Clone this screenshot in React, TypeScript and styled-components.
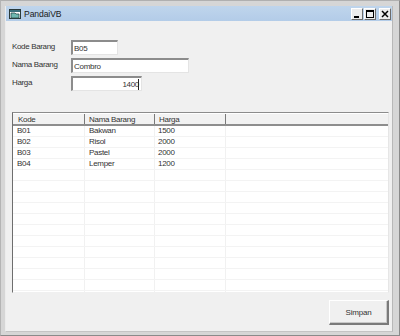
import React from "react";
import styled, { createGlobalStyle } from "styled-components";

const GlobalStyle = createGlobalStyle`
  html, body {
    margin: 0;
    padding: 0;
    background: #ffffff;
  }
  body {
    font-family: "Liberation Sans", Arial, sans-serif;
  }
`;

const Window = styled.div`
  width: 400px;
  height: 336px;
  box-sizing: border-box;
  background: #d6d6d6;
  border-top: 1px solid #b0b0b0;
  border-left: 1px solid #b4b4b4;
  border-right: 1px solid #8a8a8a;
  border-bottom: 1px solid #8a8a8a;
  padding: 5px 6px 5px 4px;
  display: flex;
  flex-direction: column;
`;

const Frame = styled.div`
  flex: 1;
  display: flex;
  flex-direction: column;
  border-left: 1px solid #ececec;
  border-right: 1px solid #b8b8b8;
  border-bottom: 1px solid #c4c4c4;
`;

const TitleBar = styled.div`
  height: 15px;
  background: linear-gradient(to bottom, #bfd5ec, #b3cce8);
  display: flex;
  align-items: center;
  padding: 0 1px 0 3px;
`;

const TitleText = styled.span`
  font-size: 8.6px;
  color: #1a1a1a;
  margin-left: 3px;
  letter-spacing: -0.1px;
`;

const TitleButtons = styled.div`
  margin-left: auto;
  display: flex;
  gap: 1px;
`;

const TitleButton = styled.div<{ $gapLeft?: number }>`
  width: 12px;
  height: 12px;
  box-sizing: border-box;
  background: #ececec;
  border-top: 1px solid #ffffff;
  border-left: 1px solid #ffffff;
  border-right: 1px solid #6c6c6c;
  border-bottom: 1px solid #6c6c6c;
  margin-left: ${(p) => p.$gapLeft ?? 0}px;
  display: flex;
  align-items: center;
  justify-content: center;
`;

const Body = styled.div`
  flex: 1;
  background: #f0f0f0;
  display: flex;
  flex-direction: column;
  padding: 19px 3px 6px 6px;
`;

const Form = styled.div`
  display: flex;
  flex-direction: column;
  gap: 3px;
`;

const FormRow = styled.div`
  display: flex;
  align-items: flex-start;
`;

const Label = styled.span`
  width: 59px;
  font-size: 8px;
  color: #333;
  letter-spacing: -0.35px;
  padding-top: 2px;
`;

const TextBox = styled.div<{ $width: number; $align?: string }>`
  width: ${(p) => p.$width}px;
  height: 15px;
  box-sizing: border-box;
  background: #ffffff;
  border-top: 2px solid #8c8c8c;
  border-left: 2px solid #8c8c8c;
  border-right: 1px solid #e4e4e4;
  border-bottom: 1px solid #e4e4e4;
  font-size: 8px;
  color: #333;
  letter-spacing: -0.3px;
  display: flex;
  align-items: center;
  justify-content: ${(p) => (p.$align === "right" ? "flex-end" : "flex-start")};
  padding: 0 2px 0 1px;
`;

const Caret = styled.span`
  display: inline-block;
  width: 1px;
  height: 11px;
  background: #222;
  margin-left: -1px;
`;

const ListView = styled.div`
  margin-top: 21px;
  height: 181px;
  box-sizing: border-box;
  background: #ffffff;
  border-top: 1px solid #8c8c8c;
  border-left: 1px solid #6e6e6e;
  border-right: 1px solid #e6e6e6;
  border-bottom: 1px solid #f0f0f0;
  display: flex;
  flex-direction: column;
  overflow: hidden;
`;

const Columns = "72px 70px 71px 1fr";

const HeaderRow = styled.div`
  display: grid;
  grid-template-columns: ${Columns};
  height: 13px;
  box-sizing: border-box;
  background: #f2f2f2;
  border-top: 1px solid #ffffff;
  border-bottom: 2px solid #8e8e8e;
`;

const HeaderCell = styled.div<{ $last?: boolean }>`
  font-size: 8px;
  color: #333;
  letter-spacing: -0.3px;
  padding-left: ${(p) => (p.$last ? 0 : 5)}px;
  border-right: ${(p) => (p.$last ? "none" : "1px solid #7a7a7a")};
  display: flex;
  align-items: center;
  &:nth-child(2),
  &:nth-child(3) {
    padding-left: 4px;
  }
`;

const Rows = styled.div`
  flex: 1;
  display: flex;
  flex-direction: column;
  overflow: hidden;
`;

const Row = styled.div`
  display: grid;
  grid-template-columns: ${Columns};
  height: 10px;
  flex-shrink: 0;
  border-bottom: 1px solid #f3f3f3;
`;

const Cell = styled.div<{ $last?: boolean }>`
  font-size: 8px;
  line-height: 10px;
  color: #333;
  letter-spacing: -0.3px;
  padding-left: 4px;
  border-right: ${(p) => (p.$last ? "none" : "1px solid #f1f1f1")};
  white-space: nowrap;
  &:nth-child(3) {
    padding-left: 3px;
  }
`;

const Footer = styled.div`
  display: flex;
  justify-content: flex-end;
  margin-top: 7px;
`;

const Button = styled.div`
  width: 60px;
  height: 25px;
  box-sizing: border-box;
  background: #f0f0f0;
  border-top: 1px solid #ffffff;
  border-left: 1px solid #ffffff;
  border-right: 2px solid #7a7a7a;
  border-bottom: 2px solid #7a7a7a;
  box-shadow: inset -1px -1px 0 #c8c8c8;
  font-size: 8px;
  color: #333;
  letter-spacing: -0.2px;
  display: flex;
  align-items: center;
  justify-content: center;
`;

const items = [
  { kode: "B01", nama: "Bakwan", harga: "1500" },
  { kode: "B02", nama: "Risol", harga: "2000" },
  { kode: "B03", nama: "Pastel", harga: "2000" },
  { kode: "B04", nama: "Lemper", harga: "1200" },
];

const FormIcon = () => (
  <svg width="12" height="10" viewBox="0 0 12 10">
    <rect x="0.5" y="0.5" width="11" height="9" fill="#ffffff" stroke="#2a3a3a" />
    <rect x="1" y="1" width="10" height="2" fill="#3a6e7a" />
    <path d="M2 4 L6 4 L7 5 L10 5 L10 9 L2 9 Z" fill="#6fb8b0" stroke="#2a4a4a" strokeWidth="0.8" />
  </svg>
);

const App = () => {
  const emptyRows = Array.from({ length: 14 });
  return (
    <>
      <GlobalStyle />
      <Window>
        <Frame>
          <TitleBar>
            <FormIcon />
            <TitleText>PandaiVB</TitleText>
            <TitleButtons>
              <TitleButton>
                <svg width="8" height="8" viewBox="0 0 8 8">
                  <rect x="1" y="6" width="5" height="2" fill="#000" />
                </svg>
              </TitleButton>
              <TitleButton>
                <svg width="8" height="8" viewBox="0 0 8 8">
                  <rect x="0.5" y="0.5" width="7" height="7" fill="none" stroke="#000" />
                  <rect x="0" y="0" width="8" height="2" fill="#000" />
                </svg>
              </TitleButton>
              <TitleButton $gapLeft={2}>
                <svg width="8" height="8" viewBox="0 0 8 8">
                  <path d="M1 1 L7 7 M7 1 L1 7" stroke="#000" strokeWidth="1.5" />
                </svg>
              </TitleButton>
            </TitleButtons>
          </TitleBar>
          <Body>
            <Form>
              <FormRow>
                <Label>Kode Barang</Label>
                <TextBox $width={47}>B05</TextBox>
              </FormRow>
              <FormRow>
                <Label>Nama Barang</Label>
                <TextBox $width={118}>Combro</TextBox>
              </FormRow>
              <FormRow>
                <Label>Harga</Label>
                <TextBox $width={71} $align="right">
                  1400
                  <Caret />
                </TextBox>
              </FormRow>
            </Form>
            <ListView>
              <HeaderRow>
                <HeaderCell>Kode</HeaderCell>
                <HeaderCell>Nama Barang</HeaderCell>
                <HeaderCell>Harga</HeaderCell>
                <HeaderCell $last />
              </HeaderRow>
              <Rows>
                {items.map((it) => (
                  <Row key={it.kode}>
                    <Cell>{it.kode}</Cell>
                    <Cell>{it.nama}</Cell>
                    <Cell>{it.harga}</Cell>
                    <Cell $last />
                  </Row>
                ))}
                {emptyRows.map((_, i) => (
                  <Row key={i}>
                    <Cell />
                    <Cell />
                    <Cell />
                    <Cell $last />
                  </Row>
                ))}
              </Rows>
            </ListView>
            <Footer>
              <Button>Simpan</Button>
            </Footer>
          </Body>
        </Frame>
      </Window>
    </>
  );
};

export default App;
